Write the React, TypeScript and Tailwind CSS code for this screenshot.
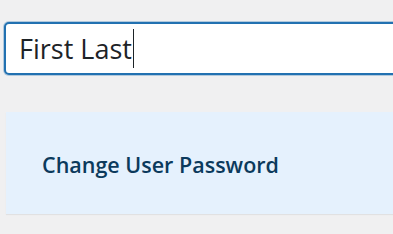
export default function App() {
  return (
    <div
      className="h-[234px] w-[393px] overflow-hidden bg-[#f0f0f1] pt-[22px]"
      style={{ fontFamily: '"Open Sans", "Noto Sans", sans-serif' }}
    >
      <div className="ml-[4px] w-[420px]">
        <div className="flex h-[53px] items-center rounded-[5px] border-2 border-[#2271b1] bg-white pl-[13px] shadow-[0_0_0_1px_rgba(34,113,177,0.3)]">
          <span className="text-[27px] leading-none text-[#1d2327]">First Last</span>
          <span className="ml-[1px] h-[39px] w-px bg-[#1d2327]" />
        </div>
      </div>

      <div className="ml-[6px] mt-[37px] flex h-[102px] w-[420px] items-center bg-[#e5f1fd] pl-[36px] pt-[3px] shadow-[0_1px_1px_rgba(0,0,0,0.06)]">
        <h2 className="text-[21.5px] font-semibold leading-none text-[#0b3a5c]">Change User Password</h2>
      </div>
    </div>
  );
}
